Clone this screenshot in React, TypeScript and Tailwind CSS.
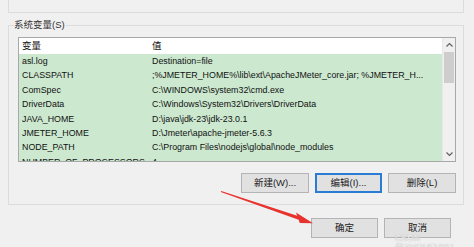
import React from "react";

const rows: [string, string][] = [
  ["asl.log", "Destination=file"],
  ["CLASSPATH", ";%JMETER_HOME%\\lib\\ext\\ApacheJMeter_core.jar; %JMETER_H..."],
  ["ComSpec", "C:\\WINDOWS\\system32\\cmd.exe"],
  ["DriverData", "C:\\Windows\\System32\\Drivers\\DriverData"],
  ["JAVA_HOME", "D:\\java\\jdk-23\\jdk-23.0.1"],
  ["JMETER_HOME", "D:\\Jmeter\\apache-jmeter-5.6.3"],
  ["NODE_PATH", "C:\\Program Files\\nodejs\\global\\node_modules"],
  ["NUMBER_OF_PROCESSORS", "4"],
];

function Btn({ label, w, focused }: { label: string; w: string; focused?: boolean }) {
  return (
    <div
      className={
        "h-[20px] flex items-center justify-center bg-[#e1e1e1] text-[9.5px] text-[#222] " +
        w +
        (focused ? " border-2 border-[#2a7bd4]" : " border border-[#b4b4b4]")
      }
    >
      {label}
    </div>
  );
}

export default function App() {
  return (
    <div className="relative w-[474px] h-[247px] overflow-hidden bg-[#f0f0f0] font-['Liberation_Sans','Noto_Sans_CJK_SC',sans-serif] text-[#111]">
      {/* upper group box remnant */}
      <div className="ml-[8px] w-[456px] h-[13px] border-x border-b border-[#dcdcdc]" />

      {/* system variables group box */}
      <div className="relative ml-[8px] mt-[12px] w-[456px] h-[180px] border border-[#dcdcdc] pt-[11px] pl-[9px]">
        <div className="absolute left-[5px] top-[-7px] bg-[#f0f0f0] pr-[1px] text-[9.5px] leading-[12px] text-[#333]">
          系统变量(S)
        </div>

        {/* list */}
        <div className="w-[438px] h-[125px] border border-[#a8a8a8] bg-white flex overflow-hidden">
          <div className="w-[423px] flex flex-col">
            <div className="h-[16px] shrink-0 flex items-center text-[9.5px] bg-white">
              <div className="w-[130px] pl-[3px]">变量</div>
              <div className="pl-[3px]">值</div>
            </div>
            {rows.map(([k, v]) => (
              <div
                key={k}
                className="h-[14.4px] shrink-0 flex items-center bg-[#cce8cf] text-[8.85px] leading-[14.4px] whitespace-nowrap"
              >
                <div className="w-[130px] pl-[3px]">{k}</div>
                <div className="pl-[3px]">{v}</div>
              </div>
            ))}
          </div>
          {/* scrollbar */}
          <div className="w-[13px] bg-[#f0f0f0] flex flex-col items-center border-l border-[#e6e6e6]">
            <svg width="9" height="14" viewBox="0 0 9 14" className="shrink-0">
              <path d="M1.5 8.5 L4.5 5.5 L7.5 8.5" fill="none" stroke="#606060" strokeWidth="1.2" />
            </svg>
            <div className="w-[10px] h-[31px] bg-[#cdcdcd]" />
            <div className="flex-1" />
            <svg width="9" height="14" viewBox="0 0 9 14" className="shrink-0">
              <path d="M1.5 5.5 L4.5 8.5 L7.5 5.5" fill="none" stroke="#606060" strokeWidth="1.2" />
            </svg>
          </div>
        </div>

        {/* list buttons */}
        <div className="mt-[11px] w-[438px] flex justify-end gap-[6px]">
          <Btn label="新建(W)..." w="w-[68px]" />
          <Btn label="编辑(I)..." w="w-[67px]" focused />
          <Btn label="删除(L)" w="w-[68px]" />
        </div>
      </div>

      {/* dialog buttons */}
      <div className="mt-[13px] w-[451px] flex justify-end gap-[6px]">
        <Btn label="确定" w="w-[67px]" />
        <Btn label="取消" w="w-[67px]" />
      </div>

      {/* red annotation arrow */}
      <svg className="absolute left-0 top-0 pointer-events-none" width="474" height="247" viewBox="0 0 474 247">
        <polygon
          points="221.2,190.9 297.2,215.8 296.0,212.6 313,223.2 299.8,223.0 298.6,219.8 220.8,192.1"
          fill="#e8322d"
        />
      </svg>

      {/* watermark */}
      <div className="absolute left-[395px] top-[234px] text-[8.5px] leading-[9px] tracking-[0.3px] text-[#f4f4f4] [text-shadow:0_0_1px_#9a9a9a]">
        CSDN @ZHOUFUYU
      </div>
    </div>
  );
}
